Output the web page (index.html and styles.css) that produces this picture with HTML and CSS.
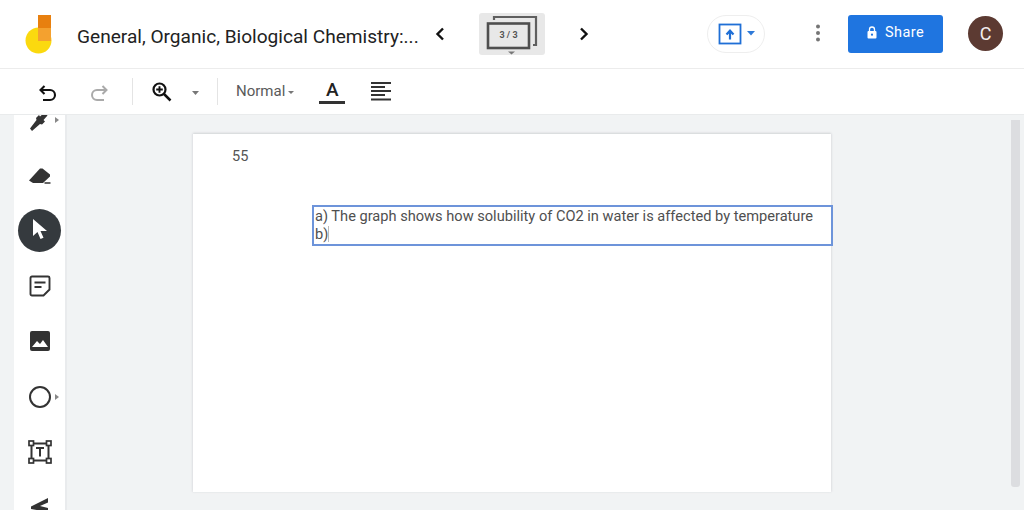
FILE: index.html
```html
<!DOCTYPE html>
<html lang="en">
<head>
<meta charset="utf-8">
<title>Jamboard</title>
<link rel="stylesheet" href="styles.css">
</head>
<body>
<header class="header">
  <svg class="logo" width="28" height="40" viewBox="0 0 28 40">
    <circle cx="13.500" cy="25.500" r="13" fill="#fbd90f"/>
    <rect x="13" y="0" width="13" height="13" fill="#e8800f"/>
    <rect x="13" y="13" width="13" height="13" fill="#f4a12f"/>
  </svg>
  <h1 class="title">General, Organic, Biological Chemistry:...</h1>
  <svg class="nav-prev" width="10" height="14" viewBox="0 0 10 14"><path d="M8 1.500 2.500 7 8 12.500" fill="none" stroke="#111" stroke-width="2.400"/></svg>
  <div class="frames">
    <svg width="66" height="42" viewBox="0 0 66 42">
      <path d="M15 7V4h42v28h-3" fill="none" stroke="#5f5f5f" stroke-width="2.200"/>
      <rect x="9" y="10.500" width="41" height="24.500" fill="none" stroke="#4f4f4f" stroke-width="2.600"/>
      <path d="M29 38.500h7l-3.500 3z" fill="#777"/>
    </svg>
    <span class="frame-label">3 / 3</span>
  </div>
  <svg class="nav-next" width="10" height="14" viewBox="0 0 10 14"><path d="M2 1.500 7.500 7 2 12.500" fill="none" stroke="#111" stroke-width="2.400"/></svg>
  <div class="present">
    <svg width="24" height="22" viewBox="0 0 24 22">
      <rect x="1.500" y="1.500" width="21" height="19" fill="none" stroke="#1f6fd6" stroke-width="1.800"/>
      <path d="M12 16.500V8M8.500 11.500l3.500-3.800 3.500 3.800" fill="none" stroke="#1f6fd6" stroke-width="2.200"/>
    </svg>
    <svg width="8" height="5" viewBox="0 0 8 5"><path d="M0 0h8L4 4.500z" fill="#2f7ad8"/></svg>
  </div>
  <svg class="more" width="6" height="18" viewBox="0 0 6 18">
    <circle cx="3" cy="2.500" r="2" fill="#757575"/><circle cx="3" cy="9" r="2" fill="#757575"/><circle cx="3" cy="15.500" r="2" fill="#757575"/>
  </svg>
  <button class="share">
    <svg width="10" height="13" viewBox="0 0 10 13"><path d="M2.500 5V3.500a2.500 2.500 0 0 1 5 0V5" fill="none" stroke="#fff" stroke-width="1.300"/><rect x="0.500" y="5" width="9" height="7.500" rx="1" fill="#fff"/><circle cx="5" cy="8.700" r="1.100" fill="#1f75e0"/></svg>
    <span>Share</span>
  </button>
  <div class="avatar">C</div>
</header>

<div class="toolbar">
  <svg class="tool-undo" width="20" height="18" viewBox="0 0 20 18"><path d="M6.500 2 2.500 6l4 4M2.500 6H12a5 5 0 0 1 0 10H5" fill="none" stroke="#111" stroke-width="2.100"/></svg>
  <svg class="tool-redo" width="20" height="18" viewBox="0 0 20 18"><path d="M13.500 2l4 4-4 4M17.500 6H8a5 5 0 0 0 0 10h7" fill="none" stroke="#aaa" stroke-width="2"/></svg>
  <span class="divider divider-a"></span>
  <svg class="tool-zoom" width="20" height="20" viewBox="0 0 20 20"><circle cx="7.500" cy="7.500" r="6" fill="none" stroke="#111" stroke-width="2.200"/><path d="M12 12l6.500 6.500" stroke="#111" stroke-width="2.500"/><path d="M7.500 4.200v6.600M4.200 7.500h6.600" stroke="#111" stroke-width="1.900"/></svg>
  <svg class="caret caret-zoom" width="7" height="4" viewBox="0 0 7 4"><path d="M0 0h7L3.500 4z" fill="#777"/></svg>
  <span class="divider divider-b"></span>
  <span class="style-name">Normal</span>
  <svg class="caret caret-style" width="6" height="3" viewBox="0 0 6 3"><path d="M0 0h6L3 3z" fill="#777"/></svg>
  <div class="text-color"><span class="letter-a">A</span><span class="color-bar"></span></div>
  <svg class="tool-align" width="20" height="19" viewBox="0 0 20 19"><path d="M0 1h20M0 5h14M0 9h20M0 13h14M0 17.500h20" stroke="#333" stroke-width="1.800"/></svg>
</div>

<main class="workspace">
  <nav class="sidebar">
    <div class="side-item">
      <svg width="24" height="24" viewBox="0 0 24 24"><path d="M2 20.500 4 23l8-7 2 .5 3-3-1.500-1.500 4-4.500-3-3-4.500 4L11 7 8 10l.5 2z" fill="#333"/></svg>
      <span class="side-caret"></span>
    </div>
    <div class="side-item">
      <svg width="24" height="24" viewBox="0 0 24 24"><path d="M1 17.500 12 5.500h2.500L22 11.500v2L15 20H5z" fill="#333"/><path d="M16.500 20h6" stroke="#333" stroke-width="1.500"/></svg>
    </div>
    <div class="side-item">
      <div class="select-circle">
        <svg width="20" height="24" viewBox="0 0 20 24"><path d="M3 1v17l4.500-4 3 7 3-1.300-3-6.700H17z" fill="#fff"/></svg>
      </div>
    </div>
    <div class="side-item">
      <svg width="22" height="22" viewBox="0 0 22 22"><path d="M3 1.500h16a1.500 1.500 0 0 1 1.500 1.500v11.500l-6 6H3A1.500 1.500 0 0 1 1.500 19V3A1.500 1.500 0 0 1 3 1.500z" fill="none" stroke="#333" stroke-width="1.900"/><path d="M5.500 7.500h11M5.500 12h7" stroke="#333" stroke-width="1.900"/></svg>
    </div>
    <div class="side-item">
      <svg width="20" height="20" viewBox="0 0 20 20"><rect width="20" height="20" rx="2" fill="#333"/><path d="M2 16l5-6 3 3 3-4 5 7z" fill="#fff"/></svg>
    </div>
    <div class="side-item">
      <svg width="24" height="24" viewBox="0 0 24 24"><circle cx="12" cy="12" r="10" fill="none" stroke="#333" stroke-width="2"/></svg>
      <span class="side-caret"></span>
    </div>
    <div class="side-item">
      <svg width="24" height="24" viewBox="0 0 24 24"><path d="M3.500 3.500h17v17h-17z" fill="none" stroke="#333" stroke-width="2"/><rect x="1" y="1" width="4.500" height="4.500" fill="#fff" stroke="#333" stroke-width="1.700"/><rect x="18.500" y="1" width="4.500" height="4.500" fill="#fff" stroke="#333" stroke-width="1.700"/><rect x="1" y="18.500" width="4.500" height="4.500" fill="#fff" stroke="#333" stroke-width="1.700"/><rect x="18.500" y="18.500" width="4.500" height="4.500" fill="#fff" stroke="#333" stroke-width="1.700"/><path d="M8 8h8M12 8v8.500" stroke="#333" stroke-width="2"/></svg>
    </div>
    <div class="side-item">
      <svg width="20" height="20" viewBox="0 0 20 20"><path d="M1 9.500 18 1v4.500L10 9l8 2v4L1 12z" fill="#333"/></svg>
    </div>
  </nav>
  <section class="page">
    <p class="page-number">55</p>
    <div class="answer">a) The graph shows how solubility of CO2 in water is affected by temperature<br>b)<span class="cursor"></span></div>
  </section>
  <div class="scrollbar"></div>
</main>
</body>
</html>
```
FILE: styles.css
```css
* { box-sizing: border-box; }
html, body { margin: 0; height: 510px; overflow: hidden; }
body { font-family: Roboto, "Liberation Sans", sans-serif; background: #f1f3f4; color: #333; display: flex; flex-direction: column; }

.header { height: 69px; flex: none; background: #fff; border-bottom: 1px solid #ececec; display: flex; align-items: center; padding-left: 25px; }
.logo { flex: none; margin-top: 1px; }
.title { margin: 4px 0 0 24px; width: 341px; font-size: 19.100px; font-weight: 400; color: #222; white-space: nowrap; }
.nav-prev { margin-left: 17px; flex: none; margin-top: 0; }
.frames { position: relative; margin-left: 34px; width: 66px; height: 42px; background: #e8e8e8; border-radius: 3px; flex: none; margin-top: -1px; }
.frames svg { display: block; }
.frame-label { position: absolute; left: 9px; top: 10px; width: 41px; height: 25px; text-align: center; font-size: 9px; font-weight: 700; line-height: 25px; color: #555; }
.nav-next { margin-left: 34px; flex: none; margin-top: 0; }
.present { margin-left: 118px; width: 58px; height: 38px; border: 1px solid #eee; border-radius: 19px; display: flex; align-items: center; justify-content: center; gap: 5px; flex: none; margin-top: -1px; }
.more { margin-left: 50px; flex: none; margin-top: -2px; }
.share { margin-left: 27px; width: 95px; height: 38px; border: 0; border-radius: 3px; background: #1f75e0; color: #fff; font: 400 14.500px Roboto, sans-serif; letter-spacing: .4px; display: flex; align-items: center; justify-content: center; gap: 8px; flex: none; padding: 0 0 2px; margin-top: -1px; }
.avatar { margin-left: 25px; width: 35px; height: 35px; border-radius: 50%; background: #5c3a32; color: #f3eeee; font-size: 18px; line-height: 35px; text-align: center; flex: none; margin-top: -2px; }

.toolbar { height: 46px; flex: none; background: #fff; border-bottom: 1px solid #e9ebec; display: flex; align-items: center; padding-left: 38px; }
.tool-undo { flex: none; margin-top: 2px; }
.tool-redo { flex: none; margin-left: 31px; margin-top: 2px; }
.divider { width: 1px; height: 27px; background: #e4e4e4; flex: none; }
.divider-a { margin-left: 23px; }
.tool-zoom { flex: none; margin-left: 19px; }
.caret-zoom { margin-left: 20px; margin-top: 2px; flex: none; }
.divider-b { margin-left: 18px; }
.style-name { margin-left: 18px; font-size: 15px; color: #5a5a5a; margin-top: -1px; }
.caret-style { margin-left: 3px; margin-top: 2px; flex: none; }
.text-color { margin-left: 25px; width: 26px; display: flex; flex-direction: column; align-items: center; flex: none; }
.letter-a { font-size: 19px; font-weight: 500; line-height: 19px; color: #222; }
.color-bar { width: 26px; height: 3px; background: #333; margin-top: 2px; }
.tool-align { margin-left: 26px; flex: none; }

.workspace { flex: 1; min-height: 0; display: flex; align-items: flex-start; overflow: hidden; padding-left: 14px; }
.sidebar { width: 53px; height: 395px; flex: none; background: #fff; border-right: 2px solid #e9ebed; overflow: hidden; }
.side-item { position: relative; height: 55.400px; display: flex; align-items: center; justify-content: center; }
.side-item:first-child { margin-top: -23px; }
.side-caret { position: absolute; right: 6px; top: 50%; margin-top: -3px; border-left: 4px solid #888; border-top: 3px solid transparent; border-bottom: 3px solid transparent; }
.select-circle { width: 43px; height: 43px; border-radius: 50%; background: #353a3e; display: flex; align-items: center; justify-content: center; }

.page { width: 638px; height: 358px; margin: 19px 0 0 126px; background: #fff; box-shadow: 0 -1px 2px #d4d6d8, 1px 0 2px #e6e8ea, -1px 0 2px #e6e8ea; flex: none; overflow: visible; }
.page-number { margin: 14px 0 0 39px; font-size: 14.500px; line-height: 17px; color: #555; }
.answer { margin: 40px 0 0 119px; width: 521px; height: 41px; border: 2px solid #6d94da; padding: 0 1px; font-size: 14.620px; line-height: 18px; color: #4f4f4f; white-space: nowrap; }
.cursor { display: inline-block; width: 1px; height: 16px; background: #bbb; vertical-align: -3px; }
.scrollbar { width: 9px; height: 367px; margin: 5px 0 0 180px; background: #dcdde0; flex: none; border-radius: 0 0 3px 3px; }
```
